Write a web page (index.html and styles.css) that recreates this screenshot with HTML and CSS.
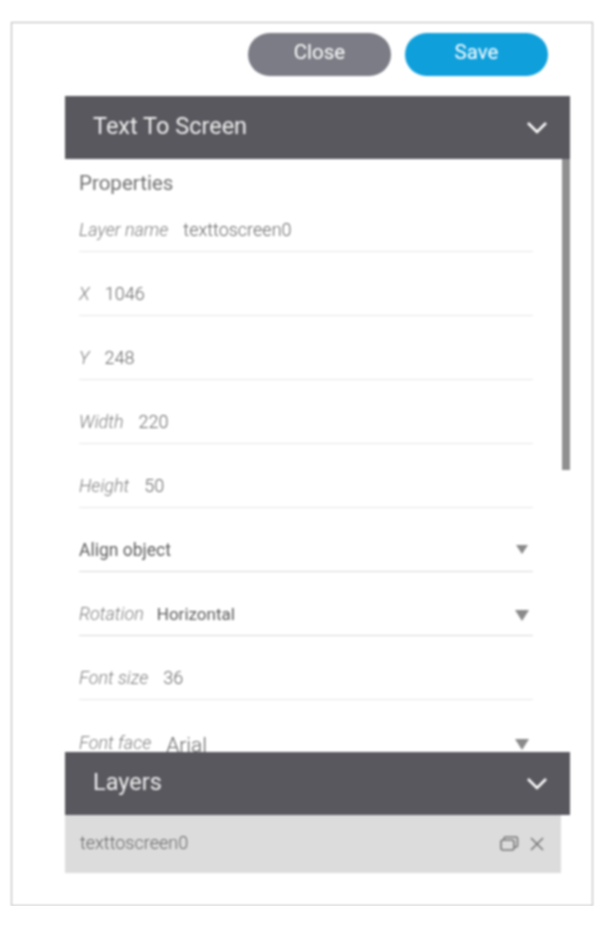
FILE: index.html
```html
<!DOCTYPE html>
<html lang="en">
<head>
  <meta charset="UTF-8">
  <meta name="viewport" content="width=device-width, initial-scale=1.0">
  <title>Text To Screen</title>
  <link rel="stylesheet" href="styles.css">
</head>
<body>
  <div class="dialog">
    <div class="actions">
      <button class="btn btn-close">Close</button>
      <button class="btn btn-save">Save</button>
    </div>

    <div class="panel">
      <div class="panel-head">
        <span>Text To Screen</span>
        <svg class="chevron" viewBox="0 0 22 13"><path d="M2 2l9 9 9-9"/></svg>
      </div>

      <div class="props">
        <div class="scrollbar"></div>
        <h2>Properties</h2>
        <div class="row first"><em>Layer name</em><span>texttoscreen0</span></div>
        <div class="row"><em>X</em><span>1046</span></div>
        <div class="row"><em>Y</em><span>248</span></div>
        <div class="row"><em>Width</em><span>220</span></div>
        <div class="row"><em>Height</em><span>50</span></div>
        <div class="row select"><b>Align object</b><i class="caret"></i></div>
        <div class="row select tight"><em>Rotation</em><b>Horizontal</b><i class="caret big"></i></div>
        <div class="row"><em>Font size</em><span>36</span></div>
        <div class="row select last"><em>Font face</em><span class="face">Arial</span><i class="caret big"></i></div>
      </div>

      <div class="panel-head">
        <span>Layers</span>
        <svg class="chevron" viewBox="0 0 22 13"><path d="M2 2l9 9 9-9"/></svg>
      </div>
      <div class="layer">
        <span>texttoscreen0</span>
        <svg class="layer-icon" viewBox="0 0 46 18">
          <rect x="1" y="5" width="13" height="10" rx="2"/>
          <path d="M4 5v-1.500q0-1.500 1.500-1.500h10.500q1.500 0 1.500 1.500v7q0 1.500-1.500 1.500h-2"/>
          <path d="M31 3l12 12M43 3l-12 12"/>
        </svg>
      </div>
    </div>
  </div>
</body>
</html>
```

FILE: styles.css
```css
body {
  margin: 0;
  background: #fff;
  font-family: Roboto, "Liberation Sans", sans-serif;
  font-weight: 300;
  color: #666;
}

.dialog {
  box-sizing: border-box;
  width: 582px;
  height: 884px;
  margin: 22px 0 0 11px;
  padding: 10px 0 0 53px;
  border: 1.500px solid #b4b4b4;
  filter: blur(0.9px);
}

.actions {
  display: flex;
  justify-content: flex-end;
  gap: 14px;
  padding-right: 44px;
}

.btn {
  width: 143px;
  height: 43px;
  padding: 0 0 6px;
  border: none;
  border-radius: 22px;
  color: #fff;
  font-family: inherit;
  font-size: 20.500px;
  font-weight: 400;
}

.btn-close {
  background-color: #7b7c85;
}

.btn-save {
  background-color: #0f9fdb;
}

.panel {
  width: 505px;
  margin-top: 20px;
}

.panel-head {
  display: flex;
  justify-content: space-between;
  align-items: center;
  box-sizing: border-box;
  height: 63px;
  padding: 0 22px 3px 28px;
  background-color: #58585e;
  color: #eee;
  font-size: 23.500px;
  font-weight: 400;
}

.chevron {
  width: 22px;
  height: 13px;
  margin-top: 3px;
  fill: none;
  stroke: #fff;
  stroke-width: 2.500;
}

.props {
  position: relative;
  box-sizing: border-box;
  height: 593px;
  padding: 13px 37px 0 14px;
  overflow: hidden;
}

.scrollbar {
  position: absolute;
  top: 0;
  right: 0;
  width: 8px;
  height: 311px;
  background-color: #8f8f8f;
}

.props h2 {
  margin: 0;
  font-size: 20.500px;
  font-weight: 400;
  line-height: 22px;
  color: #707070;
}

.row {
  display: flex;
  align-items: center;
  gap: 15px;
  box-sizing: border-box;
  height: 64px;
  padding-top: 20px;
  border-bottom: 1.500px solid #e6e6e6;
  font-size: 18px;
}

.row.first {
  height: 58px;
  padding-top: 14px;
}

.row.select {
  border-bottom-color: #d8d8d8;
}

.row.tight {
  gap: 13px;
}

.row.last {
  border-bottom: none;
}

.row em {
  color: #7c7c7c;
  font-style: italic;
}

.row b {
  color: #5c5c5c;
  font-size: 17.500px;
  font-weight: 400;
}

.row.tight b {
  font-size: 17px;
}

.caret {
  margin-left: auto;
  margin-right: 5px;
  border-top: 9px solid #8a8a8a;
  border-left: 6px solid transparent;
  border-right: 6px solid transparent;
}

.caret.big {
  margin-top: 4px;
  margin-right: 4px;
  border-top-width: 11px;
  border-top-color: #8a8a8a;
  border-left-width: 7px;
  border-right-width: 7px;
}

.face {
  margin-top: 5px;
  font-size: 21px;
}

.layer {
  display: flex;
  justify-content: space-between;
  align-items: center;
  box-sizing: border-box;
  width: 496px;
  height: 58px;
  padding: 0 15px 4px 15px;
  background-color: #dcdcdc;
  font-size: 18px;
}

.layer-icon {
  width: 46px;
  height: 18px;
  margin-top: 4px;
  fill: none;
  stroke: #777;
  stroke-width: 1.600;
}
```
